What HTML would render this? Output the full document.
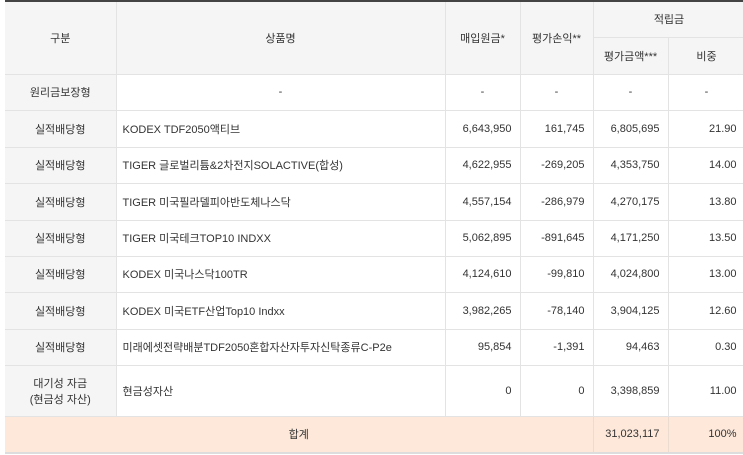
<!DOCTYPE html><html><head><meta charset="utf-8"><style>
body{margin:0;background:#fff;width:743px;height:455px;overflow:hidden;font-family:"Liberation Sans","Noto Sans CJK KR",sans-serif;font-size:11px;color:#333}
table{position:absolute;left:5px;top:0;border-collapse:collapse;width:740px;table-layout:fixed;border-top:2px solid #444}
td,th{border:1px solid #e3e3e3;padding:0;font-weight:normal;text-align:center}
tr td:first-child,tr:first-child th:first-child{border-left:none}
th{background:#f5f5f5}
td.g{background:#f5f5f5}
td.l{text-align:left;padding-left:6px}
td.r{text-align:right;padding-right:8px}
tr.t td{background:#fde8da;border-color:#ecdccf}
tr.t{border-bottom:2px solid #ddd}
</style></head><body>
<table>
<colgroup><col style="width:111px"><col style="width:329px"><col style="width:75px"><col style="width:73px"><col style="width:75px"><col style="width:77px"></colgroup>
<tr style="height:36px"><th rowspan="2">구분</th><th rowspan="2">상품명</th><th rowspan="2">매입원금*</th><th rowspan="2">평가손익**</th><th colspan="2">적립금</th></tr>
<tr style="height:37px"><th>평가금액***</th><th>비중</th></tr>
<tr style="height:36px"><td class="g">원리금보장형</td><td>-</td><td>-</td><td>-</td><td>-</td><td>-</td></tr>
<tr style="height:37px"><td class="g">실적배당형</td><td class="l">KODEX TDF2050액티브</td><td class="r">6,643,950</td><td class="r">161,745</td><td class="r">6,805,695</td><td class="r">21.90</td></tr>
<tr style="height:36px"><td class="g">실적배당형</td><td class="l">TIGER 글로벌리튬&amp;2차전지SOLACTIVE(합성)</td><td class="r">4,622,955</td><td class="r">-269,205</td><td class="r">4,353,750</td><td class="r">14.00</td></tr>
<tr style="height:37px"><td class="g">실적배당형</td><td class="l">TIGER 미국필라델피아반도체나스닥</td><td class="r">4,557,154</td><td class="r">-286,979</td><td class="r">4,270,175</td><td class="r">13.80</td></tr>
<tr style="height:36px"><td class="g">실적배당형</td><td class="l">TIGER 미국테크TOP10 INDXX</td><td class="r">5,062,895</td><td class="r">-891,645</td><td class="r">4,171,250</td><td class="r">13.50</td></tr>
<tr style="height:36px"><td class="g">실적배당형</td><td class="l">KODEX 미국나스닥100TR</td><td class="r">4,124,610</td><td class="r">-99,810</td><td class="r">4,024,800</td><td class="r">13.00</td></tr>
<tr style="height:37px"><td class="g">실적배당형</td><td class="l">KODEX 미국ETF산업Top10 Indxx</td><td class="r">3,982,265</td><td class="r">-78,140</td><td class="r">3,904,125</td><td class="r">12.60</td></tr>
<tr style="height:36px"><td class="g">실적배당형</td><td class="l">미래에셋전략배분TDF2050혼합자산자투자신탁종류C-P2e</td><td class="r">95,854</td><td class="r">-1,391</td><td class="r">94,463</td><td class="r">0.30</td></tr>
<tr style="height:51px"><td class="g">대기성 자금<br>(현금성 자산)</td><td class="l">현금성자산</td><td class="r">0</td><td class="r">0</td><td class="r">3,398,859</td><td class="r">11.00</td></tr>
<tr class="t" style="height:37px"><td colspan="4">합계</td><td class="r">31,023,117</td><td class="r">100%</td></tr>
</table>
</body></html>
